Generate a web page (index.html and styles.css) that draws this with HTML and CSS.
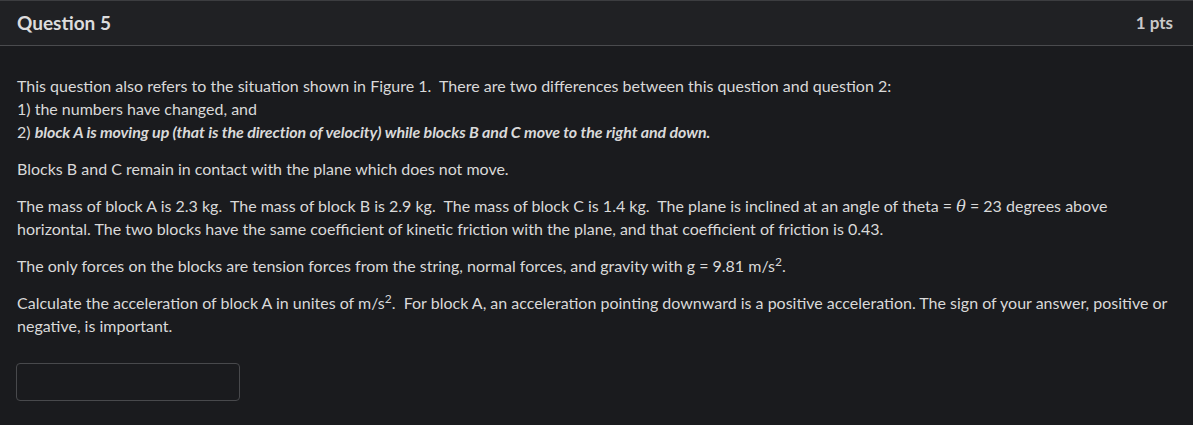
FILE: index.html
```html
<!DOCTYPE html>
<html>
<head>
<meta charset="utf-8">
<link rel="stylesheet" href="styles.css">
</head>
<body>
<div class="question">
  <div class="header">
    <span class="title">Question 5</span>
    <span class="pts">1 pts</span>
  </div>
  <div class="content">
    <p>This question also refers to the situation shown in Figure 1.&nbsp; There are two differences between this question and question 2:<br>1) the numbers have changed, and<br>2) <strong><em>block A is moving up (that is the direction of velocity) while blocks B and C move to the right and down.</em></strong></p>
    <p>Blocks B and C remain in contact with the plane which does not move.</p>
    <p>The mass of block A is 2.3 kg.&nbsp; The mass of block B is 2.9 kg.&nbsp; The mass of block C is 1.4 kg.&nbsp; The plane is inclined at an angle of theta = <em class="theta">θ</em> = 23 degrees above horizontal. The two blocks have the same coefficient of kinetic friction with the plane, and that coefficient of friction is 0.43.</p>
    <p>The only forces on the blocks are tension forces from the string, normal forces, and gravity with g = 9.81 m/s<sup>2</sup>.</p>
    <p>Calculate the acceleration of block A in unites of m/s<sup>2</sup>.&nbsp; For block A, an acceleration pointing downward is a positive acceleration. The sign of your answer, positive or negative, is important.</p>
    <div class="answer"><input class="answer-input" type="text"></div>
  </div>
</div>
</body>
</html>
```
FILE: styles.css
```css
html, body {
  margin: 0;
  padding: 0;
  background: #1a1b1e;
}
body {
  font-family: Lato, "Noto Sans", sans-serif;
  color: #d9d9d9;
  width: 1193px;
  height: 425px;
  overflow: hidden;
}
.question {
  background: #1a1b1e;
}
.header {
  display: flex;
  justify-content: space-between;
  align-items: center;
  height: 44px;
  padding: 0 20px 0 17px;
  background: #202124;
  border-top: 1px solid #3c3d40;
  border-bottom: 1px solid #4a4b4e;
  box-sizing: content-box;
}
.title, .pts {
  font-weight: 700;
  font-size: 19px;
  color: #dcdcdc;
  position: relative;
  top: -1px;
}
.pts {
  font-size: 17px;
  color: #c9c9c9;
}
.content {
  padding: 28px 17px 0 17px;
  font-size: 16px;
  line-height: 23px;
}
.content p {
  margin: 0 0 14px 0;
}
.content strong em {
  font-weight: 700;
  letter-spacing: -0.1px;
}
.theta {
  font-family: "DejaVu Serif", serif;
  font-style: italic;
  line-height: 1;
}
sup {
  font-size: 12px;
  line-height: 1;
  vertical-align: 6px;
}
.answer {
  padding-top: 12px;
}
.answer-input {
  display: block;
  width: 224px;
  height: 38px;
  box-sizing: border-box;
  margin: 0 0 0 -1px;
  background: #1a1b1e;
  border: 1px solid #48494c;
  border-radius: 4px;
  outline: none;
}
```
